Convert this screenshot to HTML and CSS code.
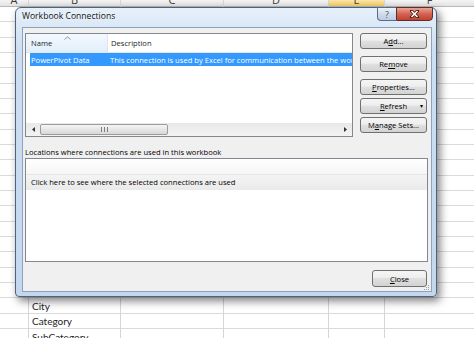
FILE: index.html
```html
<!DOCTYPE html>
<html lang="en">
<head>
    <meta charset="UTF-8">
    <meta name="viewport" content="width=device-width, initial-scale=1.0">
    <title>Workbook Connections</title>
    <link rel="stylesheet" href="styles.css">
</head>
<body>
    <!-- hoja de calculo de fondo -->
    <div class="sheet">
        <div class="col col-a"><div class="col-head"><span>A</span></div></div>
        <div class="col col-b">
            <div class="col-head"><span>B</span></div>
            <div class="cells">
                <div class="cell">City</div>
                <div class="cell">Category</div>
                <div class="cell">SubCategory</div>
            </div>
        </div>
        <div class="col col-c"><div class="col-head"><span>C</span></div></div>
        <div class="col col-d"><div class="col-head"><span>D</span></div></div>
        <div class="col col-e"><div class="col-head selected"><span>E</span></div></div>
        <div class="col col-f"><div class="col-head"><span>F</span></div></div>
    </div>

    <!-- ventana de dialogo -->
    <div class="dialog">
        <div class="titlebar">
            <span class="title">Workbook Connections</span>
            <div class="caption-buttons">
                <span class="cap-help">?</span>
                <span class="cap-close">
                    <svg width="9" height="8" viewBox="0 0 9 8"><path d="M1.5 1 L7.5 7 M7.5 1 L1.5 7" stroke="#3b1a16" stroke-width="3" stroke-linecap="square"/><path d="M1.5 1 L7.5 7 M7.5 1 L1.5 7" stroke="#fff" stroke-width="1.6"/></svg>
                </span>
            </div>
        </div>

        <div class="client">
            <div class="top">
                <div class="listview">
                    <div class="lv-head">
                        <div class="lv-col name">
                            Name
                            <svg class="sort" width="7" height="4" viewBox="0 0 7 4"><path d="M0.5 3.5 L3.5 0.8 L6.5 3.5" fill="none" stroke="#8a97a8" stroke-width="1"/></svg>
                        </div>
                        <div class="lv-col desc">Description</div>
                    </div>
                    <div class="lv-row selected">
                        <span class="c-name">PowerPivot Data</span>
                        <span class="c-desc">This connection is used by Excel for communication between the workbook and the PowerPivot data.</span>
                    </div>
                    <div class="lv-fill"></div>
                    <div class="hscroll">
                        <span class="sb-arrow"><svg width="3" height="5" viewBox="0 0 3 5"><path d="M3 0 L0 2.5 L3 5 Z" fill="#333"/></svg></span>
                        <span class="sb-thumb"><svg width="7" height="5" viewBox="0 0 7 5"><path d="M0.5 0 V5 M3.5 0 V5 M6.5 0 V5" stroke="#7d7d7d" stroke-width="1"/></svg></span>
                        <span class="sb-track"></span>
                        <span class="sb-arrow"><svg width="3" height="5" viewBox="0 0 3 5"><path d="M0 0 L3 2.5 L0 5 Z" fill="#333"/></svg></span>
                    </div>
                </div>

                <div class="side">
                    <button class="btn spaced">A<u>d</u>d...</button>
                    <button class="btn spaced">Re<u>m</u>ove</button>
                    <button class="btn"><u>P</u>roperties...</button>
                    <button class="btn drop"><u>R</u>efresh<span class="drop-arrow">&#9662;</span></button>
                    <button class="btn">M<u>a</u>nage Sets...</button>
                </div>
            </div>

            <div class="loc-label">Locations where connections are used in this workbook</div>
            <div class="locations">
                <div class="loc-head"></div>
                <div class="loc-row">Click here to see where the selected connections are used</div>
            </div>

            <div class="footer">
                <button class="btn btn-close"><u>C</u>lose</button>
            </div>

            <svg class="grip" width="6" height="6" viewBox="0 0 6 6"><path d="M4 1h1v1h-1z M2 3h1v1h-1z M4 3h1v1h-1z M0 5h1v1h-1z M2 5h1v1h-1z M4 5h1v1h-1z" fill="#9aa3ad"/></svg>
        </div>
    </div>
</body>
</html>
```

FILE: styles.css
```css
* {
    box-sizing: border-box;
}

body {
    margin: 0;
    width: 474px;
    height: 338px;
    overflow: hidden;
    position: relative;
    background: #fff;
    font-family: "Open Sans", "Noto Sans", sans-serif;
}

/* hoja de calculo */
.sheet {
    display: flex;
    height: 344px;
    background-image: repeating-linear-gradient(to bottom, transparent 0, transparent 14.33px, #dadada 14.33px, #dadada 15.33px);
    background-position: 0 7px;
}

.col {
    display: flex;
    flex-direction: column;
    border-right: 1px solid #d6d6d6;
}

.col-a { width: 29px; }
.col-b { width: 92px; }
.col-c { width: 103px; }
.col-d { width: 105px; }
.col-e { width: 56px; }
.col-f { flex: 1; border-right: none; }

.col-head {
    height: 7px;
    overflow: hidden;
    text-align: center;
    font-size: 11px;
    color: #3c3c3c;
    background: linear-gradient(#f4f4f4, #e3e3e3);
    border-bottom: 1px solid #b9b9b9;
}

.col-head span {
    display: block;
    line-height: 12px;
    margin-top: -6px;
}

.col-head.selected {
    background: linear-gradient(#fbe4a6, #f5cd6a);
}

.cells {
    flex: 1;
    display: flex;
    flex-direction: column;
    justify-content: flex-end;
}

.cell {
    height: 15.33px;
    line-height: 16px;
    padding-left: 3px;
    font-family: Lato, "Open Sans", sans-serif;
    font-size: 10px;
    color: #1e1e1e;
}

/* dialogo */
.dialog {
    position: absolute;
    left: 15px;
    top: 7px;
    width: 422px;
    height: 290px;
    display: flex;
    flex-direction: column;
    padding: 0 4px 4px 6px;
    border: 1px solid #4f6279;
    border-radius: 6px 6px 4px 4px;
    background: linear-gradient(#e6f0fa, #cddff2 40px, #c3d8ee);
    box-shadow: 3px 4px 9px rgba(0, 0, 0, 0.5);
}

.titlebar {
    height: 19px;
    display: flex;
    justify-content: space-between;
    align-items: flex-start;
}

.title {
    margin-top: 2px;
    font-size: 8.6px;
    line-height: 12px;
    color: #111;
    text-shadow: 0 0 4px #fff;
}

.caption-buttons {
    display: flex;
    margin-top: -1px;
    margin-right: -1px;
}

.cap-help, .cap-close {
    height: 14px;
    display: flex;
    align-items: center;
    justify-content: center;
}

.cap-help {
    width: 19px;
    border: 1px solid #5b6d84;
    border-right: none;
    border-radius: 0 0 0 4px;
    background: linear-gradient(#edf3fa, #cfdcec 50%, #bccde2);
    font-size: 9px;
    color: #4a5563;
}

.cap-close {
    width: 37px;
    border: 1px solid #5b2f2a;
    border-radius: 0 0 4px 0;
    background: linear-gradient(#e9a595, #d4614f 50%, #c2412f);
}

.client {
    flex: 1;
    position: relative;
    display: flex;
    flex-direction: column;
    padding: 5px 4px 4px 2px;
    border: 1px solid #8da3bd;
    background: #f0f0f0;
    font-size: 7.6px;
    color: #000;
}

.top {
    display: flex;
    gap: 7px;
}

/* lista de conexiones */
.listview {
    width: 328px;
    height: 104px;
    display: flex;
    flex-direction: column;
    border: 1px solid #828790;
    background: #fff;
    overflow: hidden;
}

.lv-head {
    height: 19px;
    display: flex;
    border-bottom: 1px solid #e5e5e5;
    color: #1e1e1e;
}

.lv-col {
    display: flex;
    align-items: center;
}

.lv-col.name {
    position: relative;
    width: 82px;
    padding-left: 5px;
    border-right: 1px solid #dfe5ec;
    background: linear-gradient(#f3f9fe, #e1eefa);
}

.sort {
    position: absolute;
    left: 38px;
    top: 2px;
}

.lv-col.desc {
    flex: 1;
    padding-left: 3px;
}

.lv-row {
    height: 13px;
    margin-left: 4px;
    display: flex;
    align-items: center;
    white-space: nowrap;
    overflow: hidden;
}

.lv-row.selected {
    background: #3399ff;
    color: #fff;
}

.c-name {
    flex: none;
    width: 77px;
    padding-left: 1px;
}

.c-desc {
    padding-left: 3px;
}

.lv-fill {
    flex: 1;
}

.hscroll {
    height: 13px;
    display: flex;
    align-items: center;
    background: linear-gradient(#e8e8e8, #f3f3f3);
}

.sb-arrow {
    width: 14px;
    display: flex;
    justify-content: center;
}

.sb-thumb {
    width: 128px;
    height: 11px;
    display: flex;
    align-items: center;
    justify-content: center;
    border: 1px solid #9b9b9b;
    border-radius: 2px;
    background: linear-gradient(#f5f5f5, #e6e6e6 50%, #d8d8d8);
}

.sb-track {
    flex: 1;
}

/* botones */
.side {
    width: 67px;
    display: flex;
    flex-direction: column;
    gap: 3px;
}

.btn {
    position: relative;
    height: 16px;
    padding: 0;
    display: flex;
    align-items: center;
    justify-content: center;
    border: 1px solid #707070;
    border-radius: 3px;
    background: linear-gradient(#f5f5f5, #eeeeee 45%, #e0e0e0 50%, #d3d3d3);
    font-family: inherit;
    font-size: 7.6px;
    color: #000;
}

.btn.spaced {
    margin-bottom: 4px;
}

.drop-arrow {
    position: absolute;
    right: 3px;
    top: 3px;
    font-size: 6px;
}

.loc-label {
    margin-top: 10px;
    height: 10px;
    line-height: 10px;
}

.locations {
    margin-top: 1px;
    width: 403px;
    height: 104px;
    border: 1px solid #828790;
    background: #fff;
}

.loc-head {
    height: 16px;
    background: linear-gradient(#fff, #f6f6f6);
    border-bottom: 1px solid #e6e6e6;
}

.loc-row {
    height: 15px;
    line-height: 15px;
    padding-left: 5px;
    background: linear-gradient(#f4f4f4, #eaeaea);
}

.footer {
    margin-top: 8px;
    display: flex;
    justify-content: flex-end;
}

.btn-close {
    width: 55px;
    height: 17px;
}

.grip {
    position: absolute;
    right: 1px;
    bottom: 1px;
}
```
